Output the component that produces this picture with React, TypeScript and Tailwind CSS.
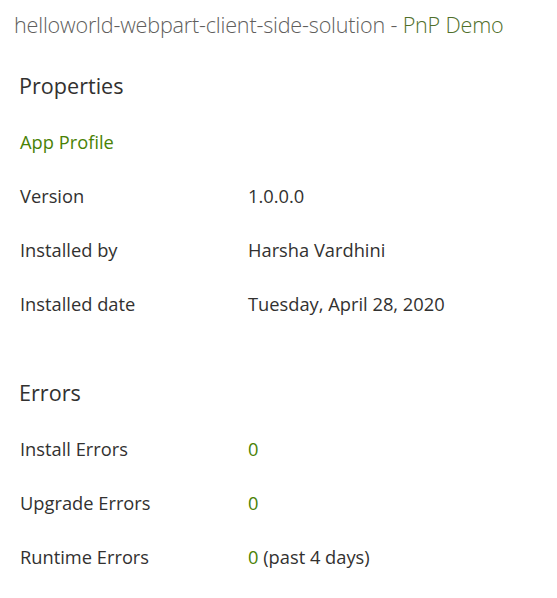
import React from "react";

const font = { fontFamily: '"Open Sans", "Noto Sans", sans-serif' };

function Row({ label, children }: { label: string; children: React.ReactNode }) {
  return (
    <div className="flex h-[54px] items-center text-[18.3px] text-[#323130]">
      <div className="w-[228px] shrink-0">{label}</div>
      <div>{children}</div>
    </div>
  );
}

export default function App() {
  return (
    <div className="w-[557px] h-[598px] bg-white" style={font}>
      <div className="pl-[14px] pt-[9px] h-[41px] text-[21.6px] font-light leading-[32px] text-[#605e5c] whitespace-nowrap tracking-[-0.2px]">
        helloworld-webpart-client-side-solution - <span className="text-[#4f6f2a]">PnP Demo</span>
      </div>
      <div className="pl-[20px]">
        <div className="mt-[30px] h-[30px] -ml-[1px] flex items-center text-[21.6px] text-[#323130]">Properties</div>
        <div className="mt-[26px] h-[30px] flex items-center text-[18.3px] text-[#498205]">App Profile</div>
        <div className="mt-[12px]">
          <Row label="Version">1.0.0.0</Row>
          <Row label="Installed by">Harsha Vardhini</Row>
          <Row label="Installed date">Tuesday, April 28, 2020</Row>
        </div>
        <div className="mt-[47px] h-[30px] -ml-[1px] flex items-center text-[21.6px] text-[#323130]">Errors</div>
        <div className="mt-[14px]">
          <Row label="Install Errors"><span className="text-[#498205]">0</span></Row>
          <Row label="Upgrade Errors"><span className="text-[#498205]">0</span></Row>
          <Row label="Runtime Errors"><span className="text-[#498205]">0</span> (past 4 days)</Row>
        </div>
      </div>
    </div>
  );
}
